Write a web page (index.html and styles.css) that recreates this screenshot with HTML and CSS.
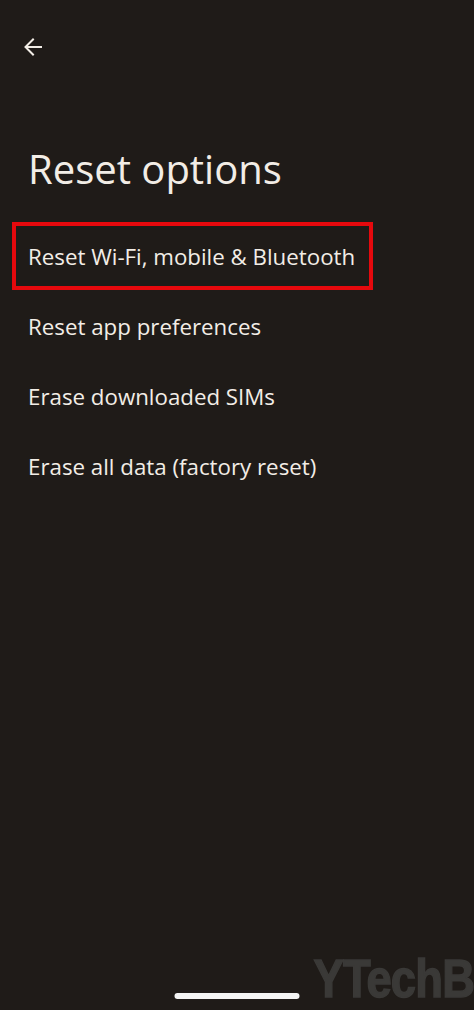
FILE: index.html
```html
<!DOCTYPE html>
<html lang="en">
<head>
  <meta charset="UTF-8" />
  <meta name="viewport" content="width=device-width, initial-scale=1.0" />
  <title>Reset options</title>
  <link rel="stylesheet" href="styles.css">
</head>
<body>

  <div class="screen">
    <div class="top-bar">
      <button class="back-button" aria-label="Back">
        <svg width="20" height="20" viewBox="0 0 20 20">
          <path d="M18 10H3M10 2.5L2.5 10L10 17.5" fill="none" stroke="#f2ede6" stroke-width="2" stroke-linecap="square" />
        </svg>
      </button>
    </div>

    <h1>Reset options</h1>

    <ul class="options">
      <li class="option marked">Reset Wi-Fi, mobile &amp; Bluetooth</li>
      <li class="option">Reset app preferences</li>
      <li class="option">Erase downloaded SIMs</li>
      <li class="option">Erase all data (factory reset)</li>
    </ul>

    <div class="home-bar"></div>
    <div class="watermark">YTechB</div>
  </div>

</body>
</html>
```

FILE: styles.css
```css
body {
  margin: 0;
  background: #1f1b18;
  font-family: "Open Sans", Roboto, sans-serif;
  color: #f2ede6;
}
.screen {
  position: relative;
  height: 1010px;
  display: flex;
  flex-direction: column;
  overflow: hidden;
}
.top-bar {
  height: 94px;
  padding-left: 23px;
  padding-top: 37px;
  box-sizing: border-box;
}
.back-button {
  background: none;
  border: none;
  padding: 0;
  width: 20px;
  height: 20px;
  cursor: pointer;
}
h1 {
  margin: 50px 0 0 28px;
  font-size: 40px;
  font-weight: 400;
  line-height: 50px;
}
.options {
  list-style: none;
  margin: 28px 0 0;
  padding: 0;
}
.option {
  height: 70px;
  display: flex;
  align-items: center;
  padding-left: 28px;
  font-size: 22.3px;
}
.option.marked {
  width: 361px;
  height: 68px;
  margin: 0 0 1px 12px;
  padding-left: 12px;
  border: 4px solid #e5090d;
  box-sizing: border-box;
}
.home-bar {
  margin: auto auto 11px;
  width: 125px;
  height: 6px;
  border-radius: 3px;
  background: #f4f4f4;
  transform: translateX(-0.5px);
}
.watermark {
  position: absolute;
  right: 0;
  bottom: 5px;
  font-family: "Liberation Sans", Arial, sans-serif;
  font-weight: bold;
  font-size: 54px;
  line-height: 1;
  color: #3a3937;
  letter-spacing: -1px;
  -webkit-text-stroke: 1.5px #3a3937;
  transform: scaleX(0.84);
  transform-origin: right center;
}
```
